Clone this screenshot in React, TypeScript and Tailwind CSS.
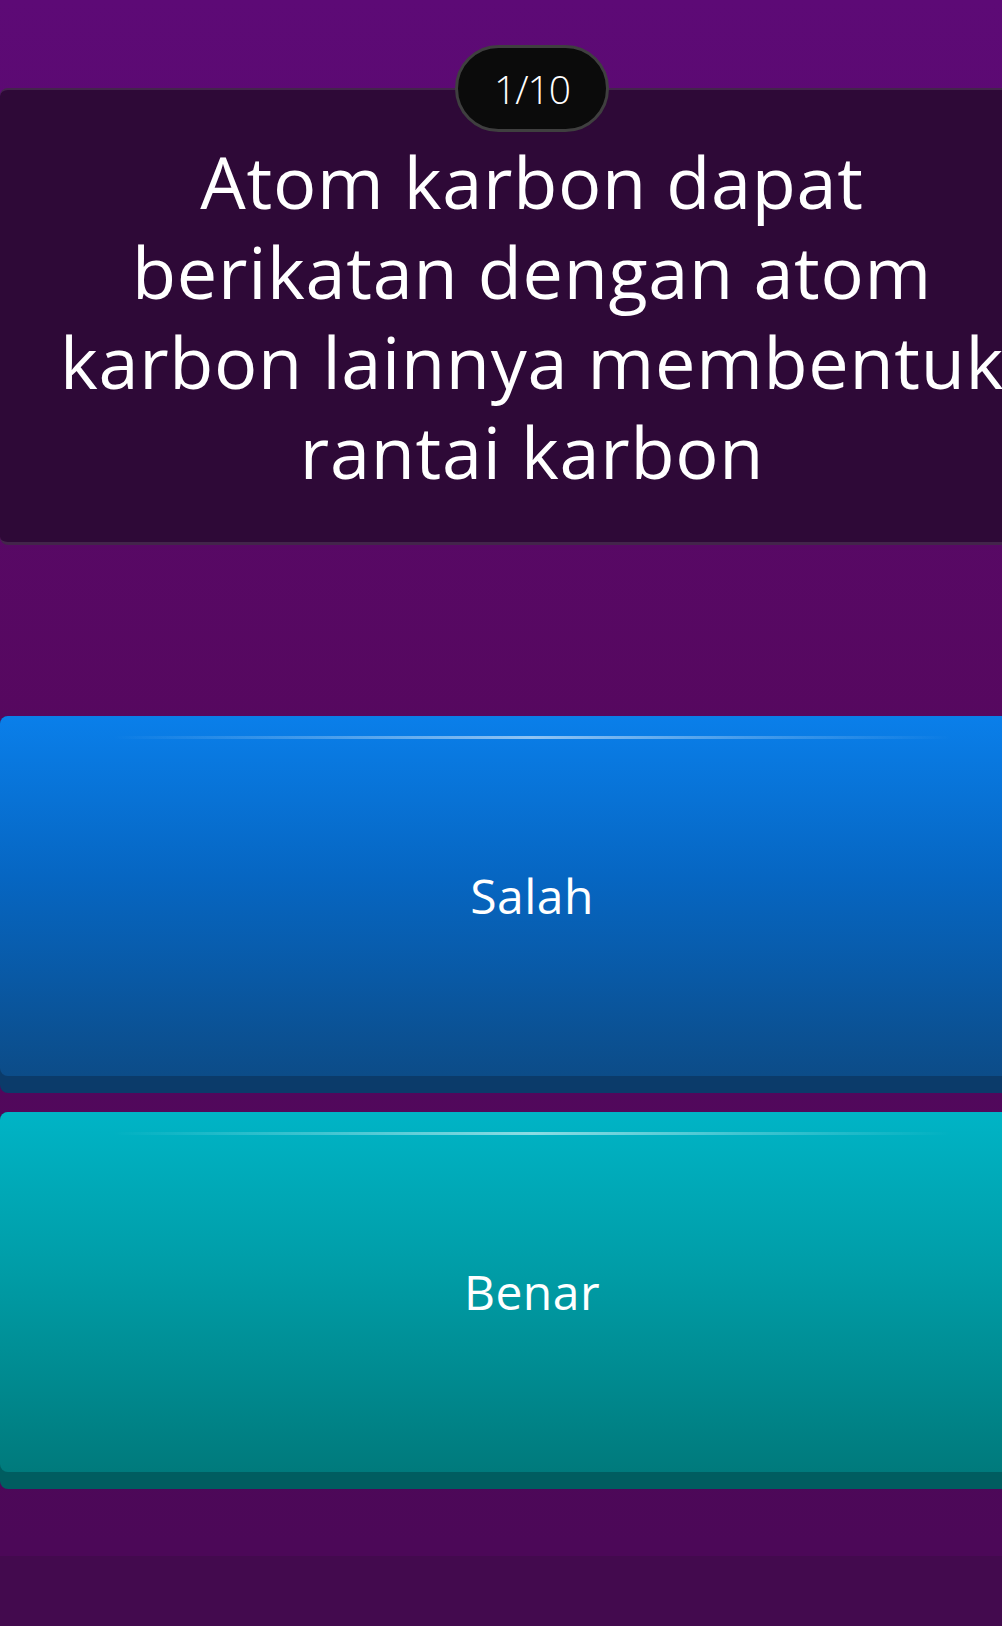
import React from "react";

const font = { fontFamily: '"Open Sans", "Noto Sans", sans-serif' };

function Option({ label, body, shadow }: { label: string; body: string; shadow: string }) {
  return (
    <div className={`w-full rounded-lg overflow-hidden ${shadow}`}>
      <div className={`relative h-[360px] rounded-b-lg flex items-center justify-center ${body}`}>
        <div className="absolute top-[20px] left-[113px] right-[113px] h-[3px] bg-[linear-gradient(90deg,rgba(255,255,255,0)_0%,rgba(255,255,255,0.25)_25%,rgba(255,255,255,0.55)_50%,rgba(255,255,255,0.25)_75%,rgba(255,255,255,0)_100%)]" />
        <span className="text-white text-[48px] leading-none tracking-[0.01em]">{label}</span>
      </div>
      <div className="h-[17px]" />
    </div>
  );
}

export default function App() {
  const lines = ["Atom karbon dapat", "berikatan dengan atom", "karbon lainnya membentuk", "rantai karbon"];
  return (
    <div
      className="relative w-full h-[1626px] overflow-hidden bg-[linear-gradient(180deg,#5d0a76_0%,#56085f_45%,#4c0858_95%)]"
      style={font}
    >
      <div className="absolute left-0 right-0 top-[1556px] bottom-0 bg-[#430a4e]" />
      <div className="relative w-[1064px] flex flex-col items-center pt-[45px]">
        <div className="relative z-10 mb-[-44px] w-[154px] h-[87px] rounded-full bg-[#0b0b0b] border-[3px] border-[#3f3f3f] flex items-center justify-center">
          <span className="text-white text-[39px] leading-none tracking-tight font-light">1/10</span>
        </div>
        <div className="w-full h-[457px] rounded-lg bg-[#2e0937] border-t-2 border-b-[3px] border-[#43254b] flex flex-col items-center justify-center">
          {lines.map((l) => (
            <div key={l} className="text-white text-[72px] leading-[90px] tracking-[0.01em] whitespace-nowrap">
              {l}
            </div>
          ))}
        </div>
        <div className="h-[171px]" />
        <Option
          label="Salah"
          body="bg-[linear-gradient(180deg,#0a7fea_0%,#0666c2_45%,#0c4c88_100%)]"
          shadow="bg-[#0b3b6a]"
        />
        <div className="h-[19px]" />
        <Option
          label="Benar"
          body="bg-[linear-gradient(180deg,#00b4c6_0%,#009ca6_45%,#007a7c_100%)]"
          shadow="bg-[#005d60]"
        />
      </div>
    </div>
  );
}
